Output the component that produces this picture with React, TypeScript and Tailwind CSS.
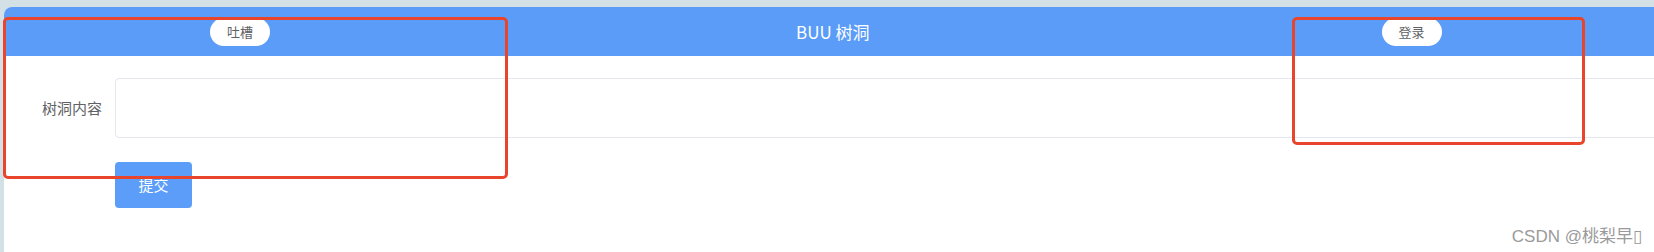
import React from 'react';

const font = { fontFamily: '"Noto Sans CJK SC", "Liberation Sans", sans-serif' };

// pill button in the header bar
const Pill = ({ label, className = '' }: { label: string; className?: string }) => (
  <button
    className={`h-[28px] w-[60px] rounded-full bg-white text-[13px] text-[#606266] shrink-0 ${className}`}
  >
    {label}
  </button>
);

export default function App() {
  return (
    <div
      className="relative h-[252px] w-[1654px] overflow-hidden bg-[#d3e1e7] pl-[4px] pt-[7px]"
      style={font}
    >
      <div className="h-full w-full overflow-hidden rounded-tl-[8px] bg-white">
        {/* header */}
        <div className="flex h-[49px] items-center bg-[#5a9cf8]">
          <Pill label="吐槽" className="ml-[206px]" />
          <span className="ml-[526px] shrink-0 text-[17px] text-white">BUU 树洞</span>
          <Pill label="登录" className="ml-[512px]" />
        </div>

        {/* form */}
        <div className="flex flex-col gap-[24px] pl-[16px] pt-[22px]">
          <div className="flex items-center">
            <label className="w-[95px] shrink-0 whitespace-nowrap pr-[13px] text-right text-[15px] text-[#606266]">
              树洞内容
            </label>
            <textarea className="h-[60px] w-[1600px] shrink-0 resize-none rounded-[4px] border border-[#e4e7ed] bg-white outline-none" />
          </div>
          <div className="pl-[95px]">
            <button className="h-[46px] w-[77px] rounded-[4px] bg-[#5b9df8] text-[15px] text-white">
              提交
            </button>
          </div>
        </div>
      </div>

      {/* red annotation boxes */}
      <div className="pointer-events-none absolute left-[3px] top-[17px] h-[162px] w-[505px] rounded-[5px] border-[3px] border-[#e8452c]" />
      <div className="pointer-events-none absolute left-[1292px] top-[17px] h-[128px] w-[293px] rounded-[5px] border-[3px] border-[#e8452c]" />

      {/* watermark */}
      <span
        className="absolute bottom-[7px] right-[12px] text-[17px] leading-none text-[#9a9a9a]"
        style={{ fontFamily: '"Liberation Sans", "Noto Sans CJK SC", sans-serif' }}
      >
        CSDN @桃梨早▯
      </span>
    </div>
  );
}
